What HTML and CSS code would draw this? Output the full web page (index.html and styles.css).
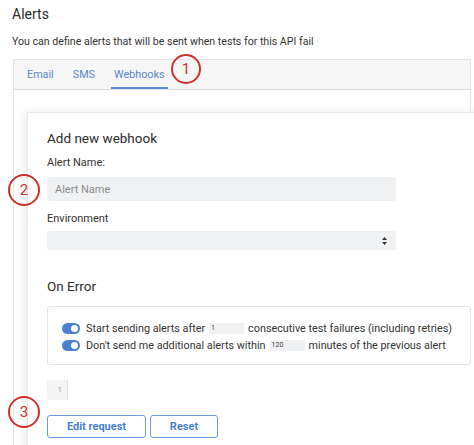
FILE: index.html
```html
<!DOCTYPE html>
<html>
<head>
<meta charset="utf-8">
<link rel="stylesheet" href="styles.css">
</head>
<body>
<div class="page">
  <h1 class="title">Alerts</h1>
  <p class="desc">You can define alerts that will be sent when tests for this API fail</p>
  <div class="panel">
    <div class="tabs">
      <span class="tab">Email</span>
      <span class="tab">SMS</span>
      <span class="tab active">Webhooks</span>
      <span class="marker m1">1</span>
    </div>
    <div class="panel-body">
      <div class="card">
        <h2 class="card-title">Add new webhook</h2>
        <label class="label">Alert Name:</label>
        <div class="input"><span class="placeholder">Alert Name</span></div>
        <label class="label env">Environment</label>
        <div class="select">
          <svg class="updown" width="7" height="10" viewBox="0 0 7 10"><path d="M3.5 1 L6 4 H1 Z M3.5 9 L6 6 H1 Z" fill="#333"/></svg>
        </div>
        <h2 class="section-title">On Error</h2>
        <div class="error-box">
          <div class="row"><span class="toggle"></span><span>Start sending alerts after</span><span class="mini">1</span><span>consecutive test failures (including retries)</span></div>
          <div class="row"><span class="toggle"></span><span>Don't send me additional alerts within</span><span class="mini">120</span><span>minutes of the previous alert</span></div>
        </div>
        <div class="gutter">1</div>
        <div class="buttons">
          <button class="btn">Edit request</button>
          <button class="btn reset">Reset</button>
        </div>
      </div>
    </div>
  </div>
  <span class="marker m2">2</span>
  <span class="marker m3">3</span>
</div>
</body>
</html>
```
FILE: styles.css
```css
html, body {
  margin: 0;
  padding: 0;
  background: #fff;
  overflow: hidden;
}
body {
  font-family: Roboto, "Noto Sans", sans-serif;
  color: #333;
  width: 474px;
  height: 445px;
}
.page {
  position: relative;
  padding: 0 0 0 12px;
  height: 445px;
  box-sizing: border-box;
}
.title {
  margin: 0;
  padding-top: 5px;
  font-size: 14px;
  font-weight: 400;
  line-height: 18px;
  color: #2b2b2b;
}
.desc {
  margin: 12px 0 0 0;
  font-size: 10.6px;
  line-height: 14px;
  color: #333;
}
.panel {
  margin-top: 10px;
  margin-left: 1px;
  width: 458px;
  border: 1px solid #e4e4e4;
  border-bottom: none;
  height: 400px;
  box-sizing: border-box;
}
.tabs {
  position: relative;
  display: flex;
  align-items: stretch;
  height: 30px;
  background: #f6f6f6;
  border-bottom: 1px solid #dcdcdc;
  padding-left: 13px;
  box-sizing: border-box;
  gap: 19px;
}
.tab {
  display: flex;
  align-items: center;
  font-size: 10.8px;
  color: #5b86c6;
  padding: 0 0;
  box-sizing: border-box;
}
.tab.active {
  border-bottom: 2px solid #5b8ed8;
  padding: 2px 3px 0 3px;
  margin-left: -3px;
}
.panel-body {
  padding: 22px 0 0 13px;
}
.card {
  width: 470px;
  background: #fff;
  border: 1px solid #e8e8e8;
  box-shadow: -3px 0 8px rgba(0,0,0,0.07);
  padding: 16px 0 0 19px;
  height: 340px;
  box-sizing: border-box;
}
.card-title {
  margin: 0;
  font-size: 13.5px;
  font-weight: 400;
  line-height: 18px;
  color: #2b2b2b;
}
.label {
  display: block;
  margin-top: 9px;
  font-size: 11px;
  line-height: 14px;
}
.label.env {
  margin-top: 11px;
}
.input {
  margin-top: 7px;
  width: 349px;
  height: 24px;
  background: #f0f1f3;
  border-radius: 3px;
  display: flex;
  align-items: center;
  padding-left: 8px;
  box-sizing: border-box;
}
.placeholder {
  font-size: 11px;
  color: #8a8a8a;
}
.select {
  margin-top: 5px;
  width: 349px;
  height: 19px;
  background: #f0f1f3;
  border-radius: 3px;
  display: flex;
  align-items: center;
  justify-content: flex-end;
  padding-right: 8px;
  box-sizing: border-box;
}
.section-title {
  margin: 27px 0 0 0;
  font-size: 13.5px;
  font-weight: 400;
  line-height: 18px;
  color: #2b2b2b;
}
.error-box {
  margin-top: 11px;
  width: 424px;
  height: 59px;
  border: 1px solid #e6e6e6;
  border-radius: 3px;
  box-sizing: border-box;
  padding: 15px 0 0 14px;
  display: flex;
  flex-direction: column;
  gap: 4px;
}
.row {
  display: flex;
  align-items: center;
  font-size: 10.8px;
  line-height: 13px;
  color: #333;
  gap: 4px;
  white-space: nowrap;
}
.toggle {
  position: relative;
  width: 18px;
  height: 11px;
  border-radius: 6px;
  background: #4b7fd0;
  margin-right: 2px;
}
.toggle::after {
  content: "";
  position: absolute;
  right: 2px;
  top: 2px;
  width: 7px;
  height: 7px;
  border-radius: 50%;
  background: #fff;
}
.mini {
  width: 35px;
  height: 11px;
  background: #f0f1f3;
  font-size: 7px;
  line-height: 11px;
  padding-left: 2px;
  box-sizing: border-box;
  color: #444;
}
.gutter {
  margin-top: 15px;
  width: 21px;
  height: 20px;
  background: #f4f4f4;
  border-right: 1px solid #e0e0e0;
  box-sizing: border-box;
  font-size: 8px;
  color: #999;
  text-align: right;
  padding-right: 5px;
  line-height: 20px;
}
.buttons {
  margin-top: 15px;
  display: flex;
  gap: 4px;
}
.btn {
  font-family: Roboto, "Noto Sans", sans-serif;
  height: 23px;
  width: 99px;
  border: 1px solid #6a9ae0;
  border-radius: 3px;
  background: #fff;
  color: #4a7fd0;
  font-size: 11px;
  font-weight: 700;
  padding: 0;
}
.btn.reset {
  width: 68px;
}
.marker {
  position: absolute;
  width: 30px;
  height: 30px;
  border: 2px solid #d0312d;
  border-radius: 50%;
  box-sizing: border-box;
  color: #d0312d;
  font-size: 15px;
  display: flex;
  align-items: center;
  justify-content: center;
  background: transparent;
}
.m1 {
  left: 157px;
  top: -6px;
}
.m2 {
  left: 8px;
  top: 174px;
  width: 32px;
  height: 32px;
}
.m3 {
  left: 8px;
  top: 396px;
  width: 32px;
  height: 32px;
}
```
